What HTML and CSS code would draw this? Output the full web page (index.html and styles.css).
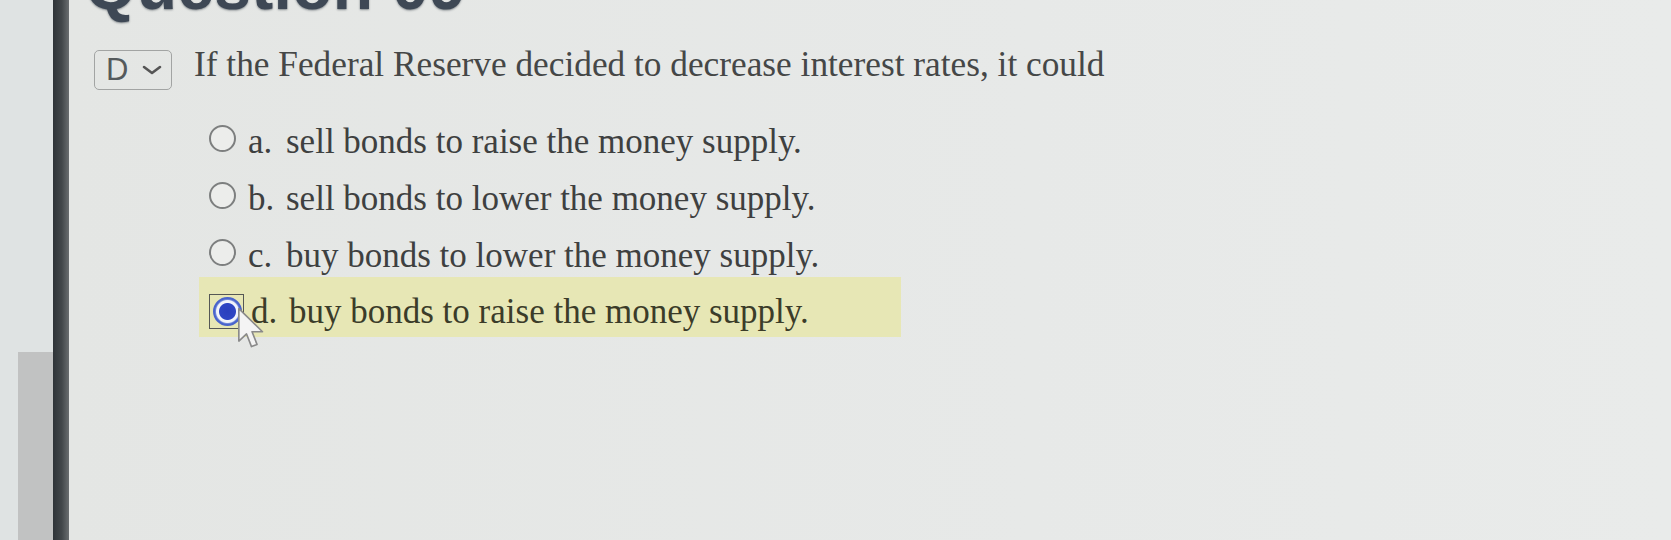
FILE: index.html
```html
<!DOCTYPE html>
<html lang="en">
<head>
<meta charset="utf-8">
<title>Question 09</title>
<link rel="stylesheet" href="styles.css">
</head>
<body>
<div class="screen">
  <div class="rail">
    <div class="rail-block"></div>
  </div>
  <div class="divider"></div>
  <main class="content">
    <h1 class="heading">Question 09</h1>
    <div class="qrow">
      <div class="dropdown">
        <span class="dd-letter">D</span>
        <svg class="dd-chevron" width="20" height="10" viewBox="0 0 20 10"><path d="M2 2 L10 8 L18 2" fill="none" stroke="#555" stroke-width="2.6" stroke-linecap="round" stroke-linejoin="round"/></svg>
      </div>
      <div class="qtext">If the Federal Reserve decided to decrease interest rates, it could</div>
    </div>
    <ul class="options">
      <li class="opt"><span class="radio"></span><span class="letter">a.</span><span class="otext">sell bonds to raise the money supply.</span></li>
      <li class="opt"><span class="radio"></span><span class="letter">b.</span><span class="otext">sell bonds to lower the money supply.</span></li>
      <li class="opt"><span class="radio"></span><span class="letter">c.</span><span class="otext">buy bonds to lower the money supply.</span></li>
      <li class="opt selected"><span class="focus"><span class="radio checked"></span></span><span class="letter">d.</span><span class="otext">buy bonds to raise the money supply.</span></li>
    </ul>
    <svg class="cursor" width="29" height="44" viewBox="0 0 26 40"><path d="M1.5 1.5 L1.5 31 L8.5 24.5 L13 36 L18 34 L13.5 22.5 L23 22.5 Z" fill="#f4f4f4" stroke="#8a8a8a" stroke-width="1.5" stroke-linejoin="round"/></svg>
  </main>
</div>
</body>
</html>
```

FILE: styles.css
```css
html, body {
  margin: 0;
  padding: 0;
}
body {
  width: 1671px;
  height: 540px;
  overflow: hidden;
  background: #e6e8e6;
}
.screen {
  display: flex;
  height: 540px;
}
.rail {
  width: 53px;
  background: #dfe3e3;
  display: flex;
  flex-direction: column;
  justify-content: flex-end;
  align-items: flex-end;
}
.rail-block {
  width: 35px;
  height: 188px;
  background: #c1c2c2;
}
.divider {
  width: 16px;
  background: linear-gradient(to right, #2f3438, #42474a 55%, #6a6e70);
}
.content {
  position: relative;
  flex: 1;
  padding-left: 25px;
  background: linear-gradient(to right, #e4e6e4, #e7e9e8 60%, #e9ebea);
}
.heading {
  margin: -47px 0 0 -9px;
  font-family: "Liberation Sans", Arial, sans-serif;
  font-weight: bold;
  font-size: 66px;
  line-height: 66px;
  letter-spacing: 0.3px;
  color: #3e4855;
  text-shadow: 0 1px 2px rgba(40, 50, 60, 0.5);
}
.qrow {
  display: flex;
  align-items: flex-start;
  gap: 22px;
  margin-top: 31px;
}
.dropdown {
  box-sizing: border-box;
  width: 78px;
  height: 40px;
  border: 1.5px solid #a2a4a3;
  border-radius: 5px;
  display: flex;
  align-items: center;
  padding-left: 11px;
  gap: 14px;
}
.dd-letter {
  font-family: "Liberation Sans", Arial, sans-serif;
  font-size: 31px;
  line-height: 40px;
  color: #555a5c;
}
.qtext {
  margin-top: -5px;
  font-family: "Liberation Serif", "Times New Roman", serif;
  font-size: 35.3px;
  line-height: 40px;
  color: #454747;
  white-space: nowrap;
}
.options {
  list-style: none;
  margin: 23px 0 0 105px;
  padding: 0;
}
.opt {
  display: flex;
  align-items: center;
  height: 57px;
  padding-left: 10px;
  font-family: "Liberation Serif", "Times New Roman", serif;
  font-size: 35px;
  line-height: 57px;
  color: #3e4040;
  white-space: nowrap;
}
.radio {
  box-sizing: border-box;
  width: 27px;
  height: 27px;
  border: 2px solid #7d7f7f;
  border-radius: 50%;
  background: #ecedeb;
  margin-bottom: 6px;
  flex: none;
}
.letter {
  width: 38px;
  margin-left: 12px;
  flex: none;
}
.selected {
  margin-top: -7px;
  height: 60px;
  padding-top: 6px;
  box-sizing: border-box;
  width: 702px;
  align-items: flex-start;
  background: #e7e7b5;
  color: #3b3c29;
}
.selected .focus {
  box-sizing: border-box;
  width: 35px;
  height: 35px;
  border: 1.5px solid #555755;
  display: flex;
  align-items: center;
  justify-content: center;
  margin-top: 11px;
  flex: none;
}
.selected .letter {
  margin-left: 7px;
}
.radio.checked {
  margin: 0 0 0 1px;
  width: 29px;
  height: 29px;
  border: 2px solid #4a64cc;
  background: radial-gradient(circle, #2a3fbd 0, #2f46c4 8px, #f4f6fb 9px, #eef1fa 11px, #7088da 12px);
}
.cursor {
  position: absolute;
  left: 168px;
  top: 307px;
}
```
